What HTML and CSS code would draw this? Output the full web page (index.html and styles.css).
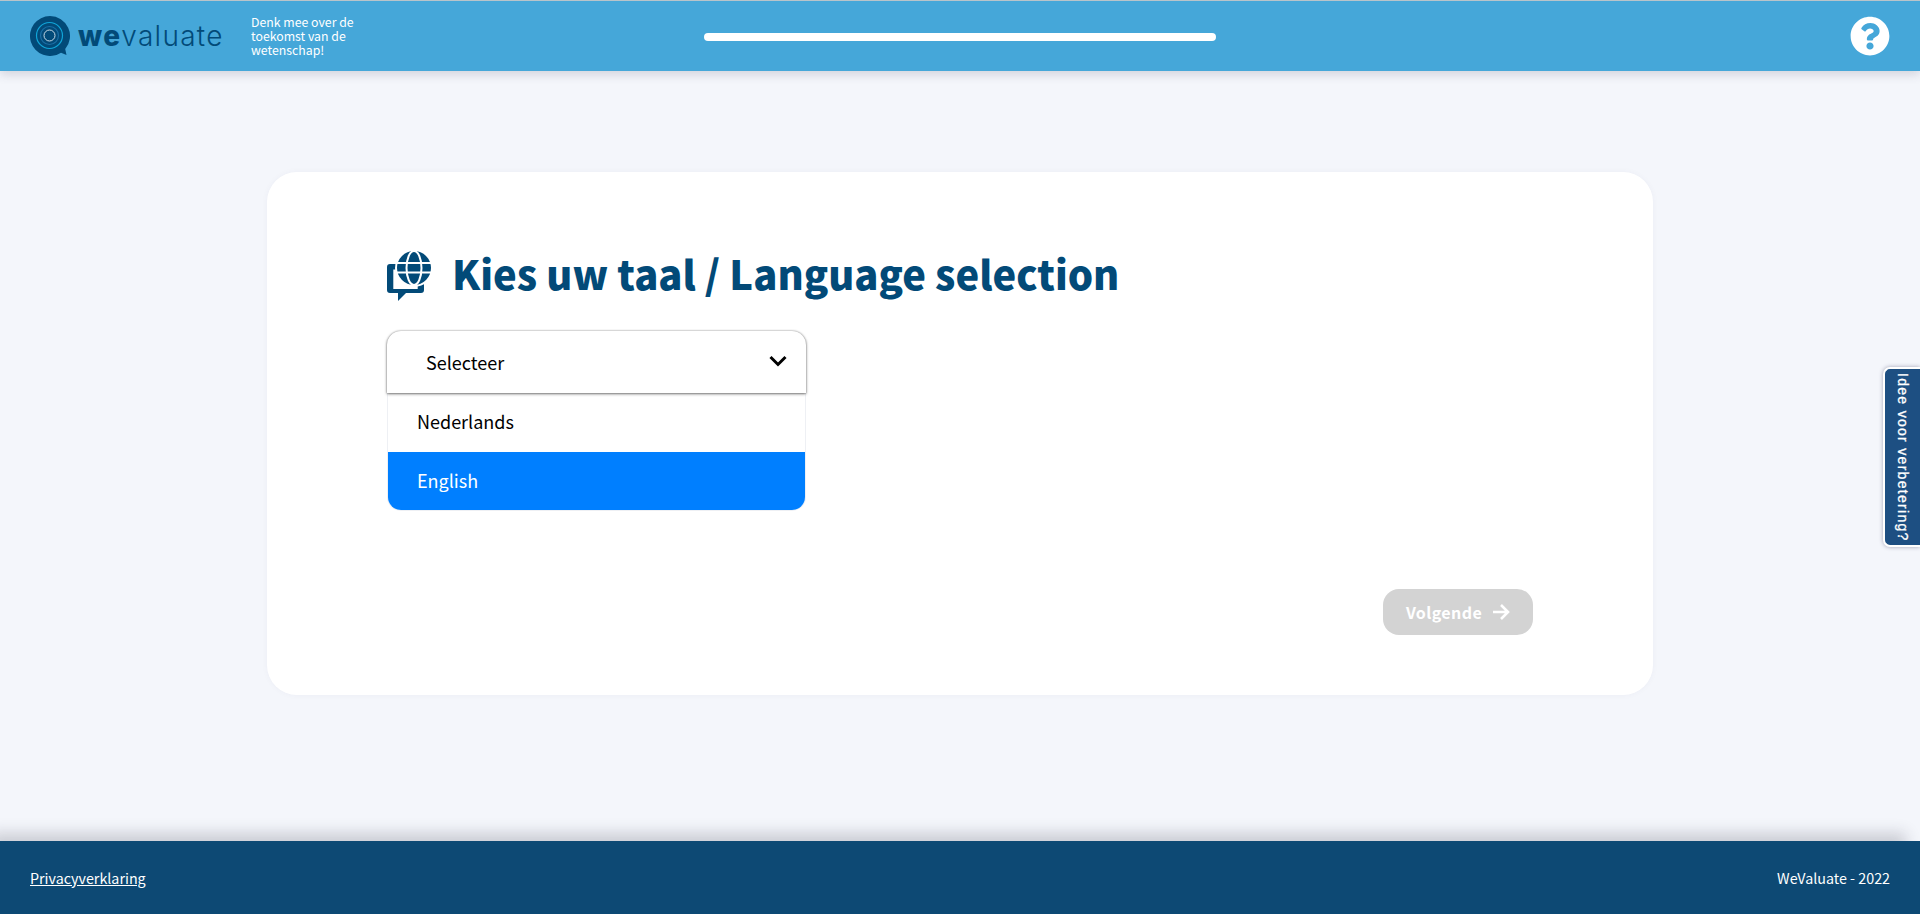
FILE: index.html
```html
<!DOCTYPE html>
<html lang="en">
<head>
  <meta charset="UTF-8" />
  <meta name="viewport" content="width=device-width, initial-scale=1.0"/>
  <title>WeValuate</title>
  <link rel="stylesheet" href="styles.css">
</head>
<body>

<header class="topbar">
  <div class="brand">
    <svg class="brand-icon" viewBox="0 0 40 40" aria-hidden="true">
      <path d="M20 0a20 20 0 1 0 11 36.700l5.500 2.300-1.300-6A20 20 0 0 0 20 0z" fill="#024a78"/>
      <circle cx="19.500" cy="19.500" r="13" fill="none" stroke="#11a5d8" stroke-width="1.200"/>
      <circle cx="19.500" cy="19.500" r="9" fill="none" stroke="#1a6fa6" stroke-width="1.200"/>
      <circle cx="19.500" cy="19.500" r="5.500" fill="none" stroke="#c9dbe6" stroke-width="1"/>
    </svg>
    <span class="brand-name"><b>we</b>valuate</span>
  </div>
  <p class="tagline">Denk mee over de toekomst van de wetenschap!</p>
  <div class="progress"></div>
  <svg class="help" viewBox="0 0 512 512" aria-hidden="true">
    <path fill="#fff" d="M504 256c0 136.997-111.043 248-248 248S8 392.997 8 256C8 119.083 119.043 8 256 8s248 111.083 248 248zM262.655 90c-54.497 0-89.255 22.957-116.549 63.758-3.536 5.286-2.353 12.415 2.715 16.258l34.699 26.310c5.205 3.947 12.621 3.008 16.665-2.122 17.864-22.658 30.113-35.797 57.303-35.797 20.429 0 45.698 13.148 45.698 32.958 0 14.976-12.363 22.667-32.534 33.976C247.128 238.528 216 254.941 216 296v4c0 6.627 5.373 12 12 12h56c6.627 0 12-5.373 12-12v-1.333c0-28.462 83.186-29.647 83.186-106.667 0-58.002-60.165-102-116.531-102zM256 338c-25.365 0-46 20.635-46 46 0 25.364 20.635 46 46 46s46-20.636 46-46c0-25.365-20.635-46-46-46z"/>
  </svg>
</header>

<main class="content">
  <section class="card">
    <div class="title-row">
      <svg class="title-icon" viewBox="0 0 45 50" aria-hidden="true">
        <!-- speech bubble, globe sits on top with a white halo -->
        <path fill="#024a78" fill-rule="evenodd" d="M3 13h31a3 3 0 0 1 3 3v23a3 3 0 0 1-3 3H19l-8 8v-8H3a3 3 0 0 1-3-3V16a3 3 0 0 1 3-3zM6.300 18.500V38h24.400V18.500z"/>
        <circle cx="27" cy="17" r="19" fill="#fff"/>
        <circle cx="27" cy="17" r="17" fill="#024a78"/>
        <ellipse cx="27" cy="17" rx="7.500" ry="17" fill="none" stroke="#fff" stroke-width="2"/>
        <path d="M9 12h36M9 21.500h36" stroke="#fff" stroke-width="2.200"/>
      </svg>
      <h1>Kies uw taal / Language selection</h1>
    </div>

    <div class="select">
      <div class="select-head">
        <span>Selecteer</span>
        <svg class="chevron" viewBox="0 0 18 12" aria-hidden="true"><path d="M1.500 2l7.500 7.500L16.500 2" fill="none" stroke="#000" stroke-width="3"/></svg>
      </div>
      <ul class="select-list">
        <li>Nederlands</li>
        <li class="active">English</li>
      </ul>
    </div>

    <div class="actions">
      <button class="next" type="button" disabled>
        Volgende
        <svg viewBox="0 0 18 18" aria-hidden="true"><path d="M1 9h15M9 2l7 7-7 7" fill="none" stroke="#fff" stroke-width="2.600"/></svg>
      </button>
    </div>
  </section>
</main>

<a class="idea-tab">Idee voor verbetering?</a>

<footer class="bottombar">
  <a class="privacy" href="#">Privacyverklaring</a>
  <span>WeValuate - 2022</span>
</footer>

</body>
</html>
```

FILE: styles.css
```css
:root {
  --bg:#f4f6fb; --sky:#45a7d9; --navy:#0d4974; --title:#024a78; --blue:#007fff;
  --sans:"Noto Sans CJK SC","Noto Sans",sans-serif;
}
*{box-sizing:border-box}
body{margin:0;height:914px;display:flex;flex-direction:column;overflow:hidden;
     background:var(--bg);font-family:var(--sans);color:#000;position:relative}

.topbar{height:71px;flex:none;display:flex;align-items:center;background:var(--sky);
        border-top:1px solid #b9c4ca;padding:0 30px;box-shadow:0 3px 10px rgba(60,60,90,.2)}
.brand{display:flex;align-items:center;gap:8px;width:221px;flex:none}
.brand-icon{width:40px;height:40px;flex:none}
.brand-name{font-family:"Inter",sans-serif;font-weight:300;font-size:28px;line-height:32px;color:var(--title);letter-spacing:1.300px}
.brand-name b{font-weight:800}
.tagline{margin:0;width:120px;flex:none;color:#fff;font-size:12.300px;line-height:14px}
.progress{width:512px;height:8px;margin:1px 0 0 333px;border-radius:4px;background:#fff}
.help{width:40px;height:40px;margin-left:auto}

.content{flex:1;padding:101px 267px 0}
.card{height:523px;background:#fff;border-radius:30px;padding:79px 120px 59px;
      display:flex;flex-direction:column;box-shadow:0 0 6px rgba(60,60,90,.04)}
.title-row{display:flex;align-items:center;gap:20px;height:50px}
.title-icon{width:45px;height:50px;flex:none}
h1{margin:0;padding-bottom:7px;font-size:39.900px;line-height:50px;font-weight:900;color:var(--title)}

.select{position:relative;width:419px;margin-top:30px}
.select-head{height:62px;display:flex;align-items:center;justify-content:space-between;
             padding:0 19px 0 39px;font-size:18px;line-height:28px;background:#fff;
             border-radius:14px 14px 0 0;position:relative;
             box-shadow:0 1px 3px rgba(0,0,0,.5),0 0 2px rgba(0,0,0,.35)}
.chevron{width:18px;height:12px;margin-bottom:3px}
.select-list{list-style:none;margin:0;padding:0;border:1px solid #eef0f4;border-top:0;
             border-radius:0 0 14px 14px;overflow:hidden;font-size:18px;line-height:28px}
.select-list li{height:59px;padding:14px 29px 0}
.select-list .active{height:58px;background:var(--blue);color:#fff}

.actions{margin-top:auto;margin-bottom:1px;display:flex;justify-content:flex-end}
.next{width:150px;height:46px;display:flex;align-items:center;justify-content:center;gap:10px;
      border:0;border-radius:16px;background:#d3d3d3;color:#fff;
      font-family:var(--sans);font-size:16px;font-weight:700;letter-spacing:.4px}
.next svg{width:18px;height:18px}

/* sticks to the right edge, over the page */
.idea-tab{position:absolute;right:0;top:367px;width:37px;height:180px;
          writing-mode:vertical-rl;text-align:center;line-height:35px;
          background:#1d4f82;color:#fff;font-family:"Liberation Sans",sans-serif;
          font-size:14px;font-weight:400;letter-spacing:1.300px;-webkit-text-stroke:.3px #fff;
          border:2px solid #fff;border-right:0;border-radius:7px 0 0 7px;
          box-shadow:0 0 4px rgba(40,40,80,.4)}

.bottombar{height:73px;flex:none;display:flex;align-items:center;justify-content:space-between;
           padding:0 30px;background:var(--navy);color:#fff;font-size:14.300px;line-height:20px;
           box-shadow:-12px -10px 14px -2px rgba(40,40,60,.2)}
.privacy{color:#fff;text-decoration:underline}
```
